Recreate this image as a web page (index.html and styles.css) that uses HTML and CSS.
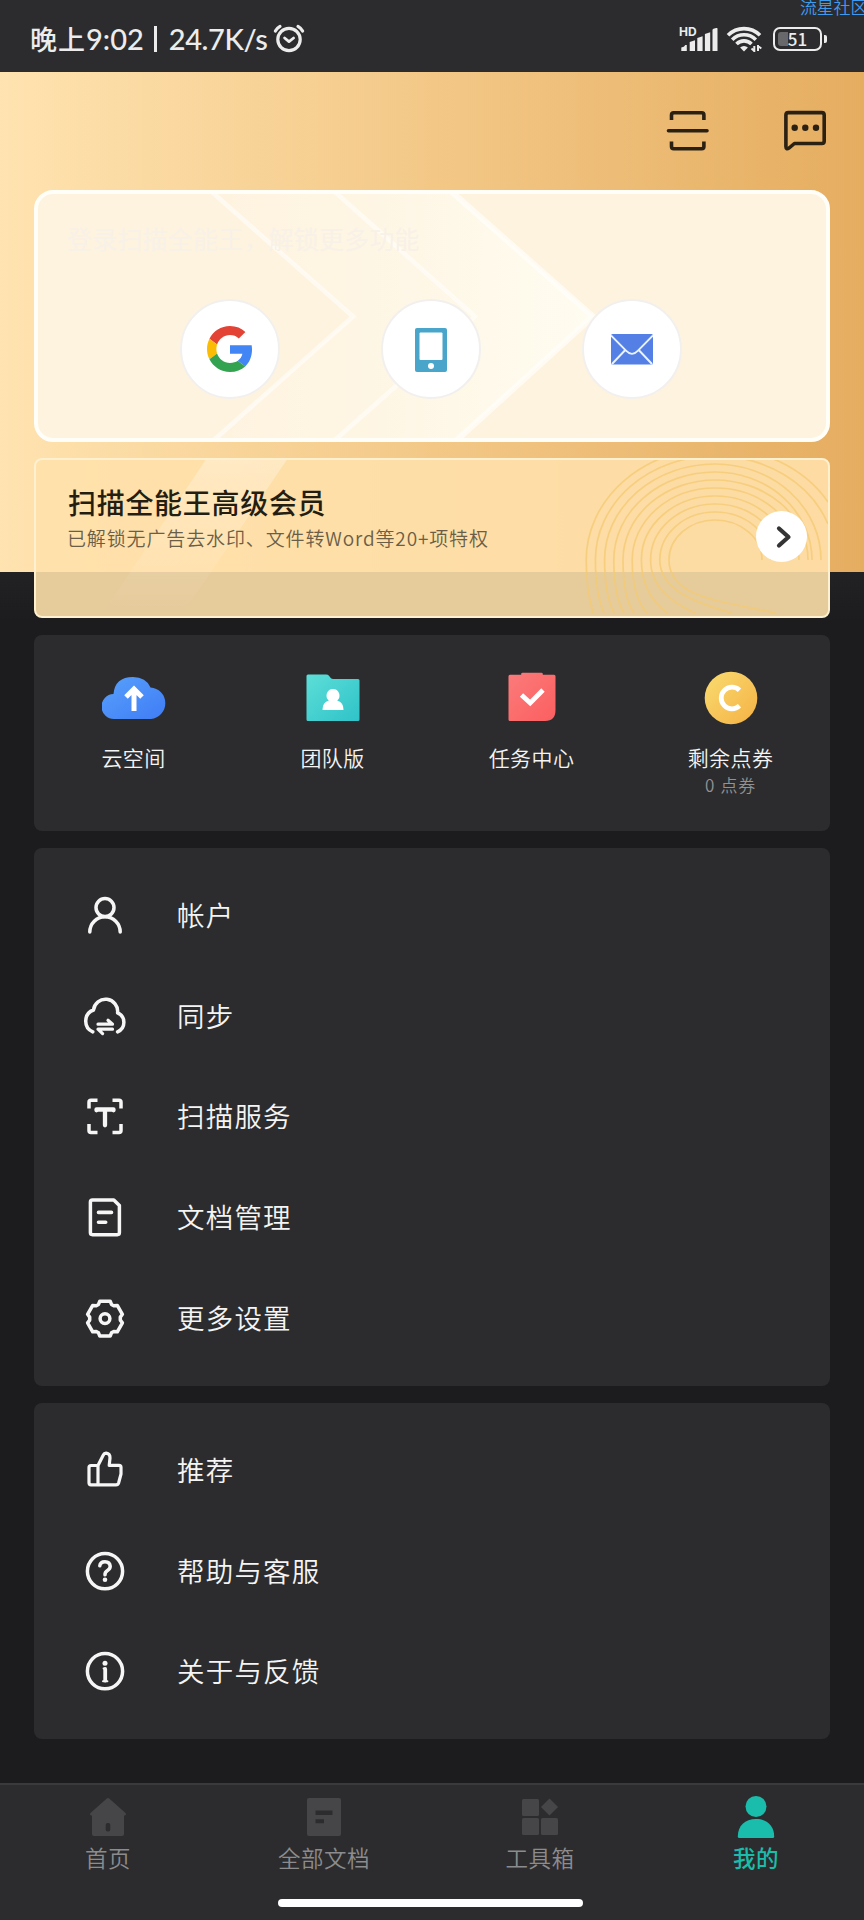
FILE: index.html
```html
<!DOCTYPE html>
<html lang="zh-CN">
<head>
<meta charset="utf-8">
<title>我的</title>
<link rel="stylesheet" href="styles.css">
</head>
<body>
<div class="screen">
  <header class="status">
    <div class="status-left">
      <span class="clock"><span class="clock-cn">晚上</span>9:02<span class="bar"></span><span class="speed">24.7K/s</span></span>
      <svg class="alarm" width="32" height="30" viewBox="273 24 32 30" fill="none" stroke="#ececec" stroke-width="3.200" stroke-linecap="round" stroke-linejoin="round"><circle cx="289" cy="39.500" r="11.200"/><path d="M284.600 38l4.400 3.600 4.600-3.600" stroke-width="2.800"/><path d="M275.400 31q1.600-3 4.600-4.600M302.600 31q-1.600-3-4.600-4.600" stroke-width="3.200"/></svg>
    </div>
    <div class="status-right">
      <div class="signal">
        <span class="hd">HD</span>
        <svg width="38" height="24" viewBox="679 28 38 24" fill="#ececec"><path d="M680.300 51v-3.500q3-.5 4-2.500h1.500v6zM688.700 51v-9l5.300-1.800V51zM696.300 51V38l5.300-1.800V51zM703.900 51V34l5.300-1.800V51zM711.500 51V30q0-1 1-1.300l3-.8q1 0 1 1V51z"/></svg>
      </div>
      <svg class="wifi" width="36" height="27" viewBox="726 25 36 27" fill="none" stroke="#ececec" stroke-width="3.600"><path d="M728 35.300a22.500 22.500 0 0 1 32 0M732.200 39.700a16.600 16.600 0 0 1 23.600 0M736.500 44a10.600 10.600 0 0 1 15 0"/><path d="M744 51.500l-3.900-3.900a5.500 5.500 0 0 1 7.800 0z" fill="#ececec" stroke="none"/><path d="M754.300 46v6M758 45v6M754.300 51l-2.800-2.500M758 46l3.300 2.500" stroke-width="2"/></svg>
      <div class="battery"><span class="charge"></span><span class="percent">51</span></div>
    </div>
    <span class="watermark">流星社区</span>
  </header>

  <main class="content">
    <div class="tools">
      <svg width="44" height="42" viewBox="666 110 44 42" fill="none" stroke="#2b2112" stroke-width="3.600"><path d="M671.500 120v-5q0-2.200 2.200-2.200h28q2.200 0 2.200 2.200v5M671.500 141.500v5q0 2.200 2.200 2.200h28q2.200 0 2.200-2.200v-5"/><path d="M668.500 130.700h38.500" stroke-linecap="round"/></svg>
      <svg width="44" height="42" viewBox="783 112 44 42" fill="none" stroke="#2b2112" stroke-width="3.600" stroke-linejoin="round"><path d="M788.300 114.600h33.400q2.500 0 2.500 2.500v26.200q0 2.200-2.300 2.200h-27.500l-5.300 4.500q-3.200 1.800-3.200-1.500v-31.400q0-2.500 2.400-2.500z"/><g fill="#2b2112" stroke="none"><circle cx="794.700" cy="129.700" r="3.200"/><circle cx="805.300" cy="129.700" r="3.200"/><circle cx="816" cy="129.700" r="3.200"/></g></svg>
    </div>

    <section class="login">
      <svg class="login-art" viewBox="34 190 796 252" fill="none">
        <defs><linearGradient id="fade" gradientUnits="userSpaceOnUse" x1="330" y1="0" x2="594" y2="0"><stop offset="0" stop-color="#fffdf2" stop-opacity=".15"/><stop offset="1" stop-color="#fffdf2" stop-opacity=".9"/></linearGradient>
        <linearGradient id="fade2" gradientUnits="userSpaceOnUse" x1="210" y1="0" x2="475" y2="0"><stop offset="0" stop-color="#fffdf2" stop-opacity="0"/><stop offset="1" stop-color="#fffdf2" stop-opacity=".5"/></linearGradient></defs>
        <path d="M212 192l142 124-142 124h124l140-124-140-124z" fill="url(#fade2)"/>
        <path d="M335 192l141 124-141 124h122l137-124-142-124z" fill="url(#fade)"/>
        <path d="M212 192l141 124.500-139 123.500M335 192l140 124.500-140 123.500" stroke="#fffefa" stroke-opacity=".65" stroke-width="4.600"/>
        <path d="M452 192l141 124.500-136 123.500" stroke="#fffefa" stroke-opacity=".75" stroke-width="6"/>
      </svg>
      <p class="login-title">登录扫描全能王，解锁更多功能</p>
      <div class="login-options">
        <button class="round" aria-label="Google"><svg width="46" height="46" viewBox="0 0 48 48"><path fill="#e24334" d="M24 9.500c3.540 0 6.710 1.220 9.210 3.600l6.850-6.850C35.900 2.380 30.470 0 24 0 14.620 0 6.510 5.380 2.560 13.220l7.980 6.190C12.430 13.720 17.740 9.500 24 9.500z"/><path fill="#4285f4" d="M46.980 24.550c0-1.570-.15-3.090-.38-4.550H24v9.020h12.940c-.58 2.960-2.260 5.480-4.780 7.180l7.730 6c4.510-4.180 7.090-10.360 7.090-17.650z"/><path fill="#fbbc05" d="M10.530 28.590c-.48-1.450-.76-2.990-.76-4.590s.27-3.140.76-4.590l-7.980-6.190C.92 16.460 0 20.120 0 24c0 3.880.92 7.540 2.560 10.780l7.970-6.190z"/><path fill="#34a351" d="M24 48c6.480 0 11.930-2.130 15.890-5.810l-7.730-6c-2.150 1.450-4.920 2.300-8.160 2.300-6.260 0-11.570-4.220-13.470-9.910l-7.980 6.190C6.510 42.620 14.620 48 24 48z"/></svg></button>
        <button class="round" aria-label="手机"><svg width="34" height="46" viewBox="0 0 34 46"><rect x="1" y="2" width="32" height="44" rx="2" fill="#49a5ca"/><rect x="5.500" y="6.500" width="23" height="27.500" rx="1" fill="#fff"/><circle cx="17" cy="40" r="3" fill="#fff"/></svg></button>
        <button class="round" aria-label="邮箱"><svg width="42" height="31" viewBox="0 0 42 31"><rect width="42" height="30.500" rx="1.500" fill="#5480e6"/><path d="M0 1.500l15 15.200q6 6.300 12 0L42 1.500M1 30l12.800-13.500M41 30L28.200 16.500" fill="none" stroke="#eaf3ff" stroke-width="1.900"/></svg></button>
      </div>
    </section>

    <section class="member">
      <svg class="member-art" viewBox="0 0 796 160" fill="none">
        <defs><linearGradient id="band" x1="0" y1="0" x2="0" y2="1"><stop offset="0" stop-color="#fff" stop-opacity=".32"/><stop offset=".6" stop-color="#fff" stop-opacity=".1"/><stop offset="1" stop-color="#fff" stop-opacity="0"/></linearGradient></defs>
        <path d="M173 0h81L146 160H65z" fill="url(#band)"/>
        <g stroke="#f4cb74" stroke-opacity=".8" stroke-width="1.700">
          <path d="M741 155C688 143 635 140 635 102A46 40 0 0 1 681 62A47 40 0 0 1 728 102"/>
          <path d="M698 155C662 145 625.800 132 625.800 102A55.200 48 0 0 1 681 54A56 48 0 0 1 737 102"/>
          <path d="M661 155C639 145 616.600 130 616.600 102A64.400 56 0 0 1 681 46A65 56 0 0 1 746 102"/>
          <path d="M633 155C620 145 607.400 130 607.400 102A73.600 64 0 0 1 681 38A74 64 0 0 1 755 102"/>
          <path d="M613 155C604 145 598.200 130 598.200 102A82.800 72 0 0 1 681 30A84 72 0 0 1 765 102"/>
          <path d="M600 155C593 145 589 130 589 102A92 80 0 0 1 681 22A93 80 0 0 1 774 102"/>
          <path d="M590 155C584 145 579.800 130 579.800 102A101.200 88 0 0 1 681 14A97 88 0 0 1 778 102"/>
          <path d="M580 155C575 145 570.600 130 570.600 102A110.400 96 0 0 1 681 6A106 96 0 0 1 787 102"/>
          <path d="M570 155C565 143 561.400 125 561.400 102A119.600 104 0 0 1 681 -2A120 104 0 0 1 794 66"/>
          <path d="M559 155C555 141 552.200 125 552.200 102A128.800 112 0 0 1 681 -10A129 112 0 0 1 794 44"/>
        </g>
      </svg>
      <div class="member-text">
        <h1>扫描全能王高级会员</h1>
        <p>已解锁无广告去水印、文件转Word等20+项特权</p>
      </div>
      <button class="go" aria-label="查看"><svg width="16" height="24" viewBox="0 0 16 24"><path d="M3 3.500l9.500 8.500L3 20.500" fill="none" stroke="#343434" stroke-width="4.200" stroke-linecap="round" stroke-linejoin="round"/></svg></button>
    </section>

    <section class="card shortcuts">
      <div class="shortcut">
        <svg width="64" height="56" viewBox="0 0 64 56"><defs><linearGradient id="gb" x1="0" y1="0" x2="1" y2="1"><stop offset="0" stop-color="#58a1fb"/><stop offset="1" stop-color="#3f7cf6"/></linearGradient></defs><path d="M12.500 49A12.500 12.500 0 0 1 11.500 24Q13 7 31 7Q44 7 48.500 17.500A15.800 15.800 0 0 1 49 49z" fill="url(#gb)"/><path d="M32 41V21M24 27l8-8 8 8" fill="none" stroke="#fff" stroke-width="5"/></svg>
        <span>云空间</span>
      </div>
      <div class="shortcut">
        <svg width="64" height="56" viewBox="0 0 64 56"><defs><linearGradient id="gt" x1="0" y1="0" x2="1" y2="1"><stop offset="0" stop-color="#5dded8"/><stop offset="1" stop-color="#2fc3c8"/></linearGradient></defs><path d="M7 4.500h18q2 0 3 1.200l1.500 2q1 1.300 3 1.300H57q1.500 0 1.500 1.500v39q0 1.500-1.500 1.500H7q-1.500 0-1.500-1.500V6q0-1.500 1.500-1.500z" fill="url(#gt)"/><path d="M32 19a6.600 6.600 0 0 1 4.200 11.600q6.300 2 6.300 8.900 0 .5-.5.500H22q-.5 0-.5-.5 0-6.900 6.300-8.900A6.600 6.600 0 0 1 32 19z" fill="#fff"/></svg>
        <span>团队版</span>
      </div>
      <div class="shortcut">
        <svg width="64" height="56" viewBox="0 0 64 56"><defs><linearGradient id="gr" x1="0" y1="0" x2="1" y2="1"><stop offset="0" stop-color="#fb7b7b"/><stop offset="1" stop-color="#fb5f60"/></linearGradient></defs><path d="M10 4.700h11.200V4q0-1.300 1.300-1.300H41.500q1.300 0 1.300 1.300v.7H54q1.500 0 1.500 1.500V40Q55.500 51 45 51H10q-1.500 0-1.500-1.500V6.200q0-1.500 1.500-1.500z" fill="url(#gr)"/><path d="M21.500 25l8.700 8 12.800-13" fill="none" stroke="#fff" stroke-width="4.800"/></svg>
        <span>任务中心</span>
      </div>
      <div class="shortcut">
        <svg width="64" height="56" viewBox="0 0 64 56"><defs><linearGradient id="gy" x1="0" y1="0" x2="1" y2="1"><stop offset="0" stop-color="#f9dc70"/><stop offset="1" stop-color="#f5b144"/></linearGradient></defs><circle cx="32" cy="28" r="26.300" fill="url(#gy)"/><path d="M40.500 20.200A10.800 10.800 0 1 0 40.500 35.800" fill="none" stroke="#fff" stroke-width="4.800"/></svg>
        <span>剩余点券</span>
        <small>0 点券</small>
      </div>
    </section>

    <section class="card menu">
      <div class="row"><svg class="icon" viewBox="0 0 48 48"><circle cx="24" cy="16.600" r="9"/><path d="M8.800 41a15.200 15.200 0 0 1 30.400 0"/></svg><span>帐户</span></div>
      <div class="row"><svg class="icon" viewBox="0 0 48 48"><path d="M11.800 39.900A11.800 11.800 0 0 1 12.500 18A12 12 0 0 1 36.600 20.800A10.400 10.400 0 0 1 36.600 39.900"/><path d="M17 32.200h14.500L27 28.200M31.500 37.200H17l4.600 4.400" stroke-width="3.200"/></svg><span>同步</span></div>
      <div class="row"><svg class="icon" viewBox="0 0 48 48"><path d="M8 16.500v-6.300q0-2 2-2h6.500M31.500 8.200H38q2 0 2 2v6.300M40 32v6.400q0 2-2 2h-6.500M16.500 40.400H10q-2 0-2-2V32" stroke-linecap="butt"/><path d="M15.500 18.300v-.8h17v.8M24 17.500v15.800" stroke-width="4.300"/></svg><span>扫描服务</span></div>
      <div class="row"><svg class="icon" viewBox="0 0 48 48"><path d="M11.500 7h21.300l5.600 5.600V39.600q0 2.100-2.100 2.100H11.500q-2.100 0-2.100-2.100V9.100Q9.400 7 11.500 7z"/><path d="M17.500 19.400h13M17.500 29.200h7.200" stroke-width="3.600"/></svg><span>文档管理</span></div>
      <div class="row"><svg class="icon" viewBox="0 0 48 48"><path transform="translate(24 24.600)" d="M5.200-17.400L6.500-14.200 8.800-12.900 12.300-13.200 17.400-4.300 15.300-1.500V1.500L17.400 4.300 12.300 13.200 8.800 12.900 6.500 14.200 5.200 17.400H-5.200L-6.500 14.200-8.800 12.900-12.300 13.200-17.400 4.300-15.300 1.500V-1.500L-17.400-4.300-12.300-13.200-8.800-12.900-6.500-14.200-5.200-17.400z"/><circle cx="24" cy="24.600" r="4.900"/></svg><span>更多设置</span></div>
    </section>

    <section class="card menu">
      <div class="row"><svg class="icon thin" viewBox="0 0 48 48"><path d="M17 19.500L22.300 9Q23.200 7 25.200 7.100Q29.200 7.600 29 12L28.200 19.300H38Q40 19.300 40 21.300V28L37.600 37Q37 38.800 35 38.800H10Q8 38.800 8 36.800V21.500Q8 19.500 10 19.500H17V38.800"/></svg><span>推荐</span></div>
      <div class="row"><svg class="icon" viewBox="0 0 48 48"><circle cx="24" cy="24.200" r="17.600"/><path d="M18.800 18.800Q19.200 14.700 24 14.700T29.200 19.200Q29.200 21.800 26.500 23.400T24 27.800"/><circle class="solid" cx="24" cy="32.700" r="2.300"/></svg><span>帮助与客服</span></div>
      <div class="row"><svg class="icon" viewBox="0 0 48 48"><circle cx="24" cy="24.200" r="17.600"/><path d="M24.200 22v11.500" stroke-width="3.800"/><path d="M22.600 21.600h1.400M22 34.200h4.400" stroke-width="2"/><circle class="solid" cx="24" cy="16.300" r="2.500"/></svg><span>关于与反馈</span></div>
    </section>
  </main>

  <nav class="tabbar">
    <div class="tabs">
      <div class="tab"><svg width="44" height="44" viewBox="0 0 44 44"><path d="M20.800 3.600q1.200-1 2.400 0L39.500 18q1.300 1.700-.5 2.400h-1V39q0 2-2 2H8q-2 0-2-2V20.400H5q-1.800-.7-.5-2.400z"/><rect x="19.700" y="28" width="4.600" height="8.500" rx="2" fill="#2c2c2e"/></svg><span>首页</span></div>
      <div class="tab"><svg width="44" height="44" viewBox="0 0 44 44"><rect x="5" y="3" width="34" height="38" rx="2"/><path d="M13.500 15.500h17v4.500h-17zM13.500 24.300H22v4h-8.500z" fill="#2c2c2e"/></svg><span>全部文档</span></div>
      <div class="tab"><svg width="44" height="44" viewBox="0 0 44 44"><rect x="4" y="4" width="17" height="17" rx="1.500"/><rect x="4" y="23" width="17" height="17" rx="1.500"/><rect x="23" y="23" width="17" height="17" rx="1.500"/><path d="M31.500 3.500L40 12l-8.500 8.500L23 12z"/></svg><span>工具箱</span></div>
      <div class="tab active"><svg width="44" height="44" viewBox="0 0 44 44"><circle cx="22" cy="11.500" r="10.500"/><path d="M3.800 41.500C3.800 31 11 24 22 24S40.200 31 40.200 41.500Q40.200 43 38.700 43H5.300Q3.800 43 3.800 41.500z"/></svg><span>我的</span></div>
    </div>
    <div class="home-bar"></div>
  </nav>
</div>
</body>
</html>
```
FILE: styles.css
```css
* { box-sizing: border-box; margin: 0; padding: 0; }
body {
  width: 864px;
  background: #1c1c1e;
  font-family: "Noto Sans CJK SC", sans-serif;
  color: #f4f4f4;
}
.screen {
  display: flex;
  flex-direction: column;
  width: 864px;
  height: 1920px;
  overflow: hidden;
  position: relative;
}
button { border: 0; background: none; }
svg { display: block; flex: none; }

/* status bar */
.status {
  flex: none;
  height: 72px;
  display: flex;
  justify-content: space-between;
  padding: 24px 38px 0 30px;
  background: #2c2c2e;
  color: #ececec;
  position: relative;
}
.status-left { display: flex; }
.clock {
  display: flex;
  align-items: center;
  width: 243px;
  height: 30px;
  font: 500 29px/30px Lato, "Noto Sans CJK SC", sans-serif;
  white-space: nowrap;
}
.clock-cn { font-size: 27px; letter-spacing: 1px; font-family: "Noto Sans CJK SC", sans-serif; }
.bar { width: 3px; height: 26px; margin: 0 12px 0 10px; background: #ececec; }
.speed { letter-spacing: -.4px; }
.status-right { display: flex; }
.signal { position: relative; width: 38px; padding-top: 4px; margin-right: -1px; }
.hd {
  position: absolute;
  left: -1px;
  top: 2px;
  font: 700 12px/11px Inter, sans-serif;
}
.wifi { margin: 1px 0 0 9px; }
.battery {
  position: relative;
  width: 49px;
  height: 24px;
  margin: 3px 4px 0 11px;
  border: 2px solid #ececec;
  border-radius: 7px;
}
.battery::after {
  content: "";
  position: absolute;
  right: -7px;
  top: 6px;
  width: 3px;
  height: 8px;
  border-radius: 0 2px 2px 0;
  background: #ececec;
}
.charge {
  position: absolute;
  left: 3px;
  top: 3px;
  width: 10px;
  height: 14px;
  border-radius: 3px 0 0 3px;
  background: #68686a;
}
.percent {
  position: relative;
  display: block;
  text-align: center;
  font: 500 17px/19px "Noto Sans CJK SC", sans-serif;
}
.watermark {
  position: absolute;
  left: 800px;
  top: -2px;
  font-size: 17px;
  line-height: 18px;
  font-weight: 350;
  letter-spacing: -.2px;
  color: #3f9bee;
  white-space: nowrap;
}

/* scrolling content over the gold hero */
.content {
  flex: 1;
  display: flex;
  flex-direction: column;
  gap: 17px;
  padding: 0 34px;
  background:
    linear-gradient(90deg, #ffe3b0, #f3c887 50%, #e5ad60) 0 0 / 100% 500px no-repeat,
    linear-gradient(#222224, #1c1c1e) 0 500px / 100% 50px no-repeat,
    #1c1c1e;
}
.tools {
  height: 101px;
  display: flex;
  justify-content: flex-end;
  gap: 73px;
  padding: 38px 3px 0 0;
}
.login {
  position: relative;
  height: 252px;
  border: 4px solid #fffef8;
  border-radius: 19px;
  background: #fef3df;
  overflow: hidden;
}
.login-art { position: absolute; left: -4px; top: -4px; width: 796px; height: 252px; }
.login-title {
  position: relative;
  padding: 29px 0 0 29px;
  font-size: 25px;
  line-height: 30px;
  letter-spacing: .2px;
  color: #f8f1e8;
}
.login-options {
  position: relative;
  left: -1px;
  display: flex;
  justify-content: center;
  gap: 101px;
  margin-top: 46px;
}
.round {
  display: flex;
  align-items: center;
  justify-content: center;
  width: 100px;
  height: 100px;
  border: 2px solid #f2f0ee;
  border-radius: 50%;
  background: #fff;
}
.member {
  position: relative;
  flex: none;
  height: 160px;
  margin-top: -1px;
  display: flex;
  justify-content: space-between;
  border: 2px solid #fff0cf;
  border-radius: 8px;
  background: rgba(255, 225, 171, .89);
  overflow: hidden;
}
.member-art { position: absolute; left: -2px; top: -2px; width: 796px; height: 160px; }
.member-text { position: relative; padding: 23px 0 0 32px; }
.member h1 {
  font-size: 28px;
  line-height: 38px;
  font-weight: 500;
  letter-spacing: .7px;
  color: #241d12;
}
.member p {
  font-size: 19px;
  line-height: 28px;
  letter-spacing: .87px;
  font-weight: 350;
  color: #6b5e48;
  margin-top: 3px;
  margin-left: -1px;
}
.go {
  position: relative;
  display: flex;
  align-items: center;
  justify-content: center;
  width: 51px;
  height: 51px;
  margin: 51px 21px 0 0;
  padding-left: 5px;
  border-radius: 50%;
  background: #fff;
}
.card { background: #2c2c2e; border-radius: 8px; flex: none; }
.shortcuts {
  display: grid;
  grid-template-columns: repeat(4, 1fr);
  height: 196px;
  padding-top: 35px;
}
.shortcut { display: flex; flex-direction: column; align-items: center; }
.shortcut span {
  margin-top: 16px;
  font-size: 21px;
  line-height: 30px;
  letter-spacing: .4px;
  font-weight: 350;
}
.shortcut small {
  margin-top: 2px;
  font-size: 17px;
  line-height: 22px;
  letter-spacing: .7px;
  word-spacing: 1px;
  font-weight: 350;
  color: #929294;
}
.menu { padding: 17px 0 17px 47px; }
.row {
  display: flex;
  align-items: center;
  gap: 48px;
  height: 100.8px;
}
.row span {
  padding-bottom: 3px;
  font-size: 27.5px;
  line-height: 40px;
  letter-spacing: 1.2px;
  font-weight: 350;
}
.icon {
  width: 48px;
  height: 48px;
  margin-bottom: 1px;
  fill: none;
  stroke: #f6f6f6;
  stroke-width: 3.500;
  stroke-linecap: round;
  stroke-linejoin: round;
}
.icon.thin { stroke-width: 3.200; }
.icon .solid { fill: #f6f6f6; stroke: none; }

/* bottom navigation */
.tabbar {
  flex: none;
  height: 137px;
  border-top: 2px solid #3a3a3c;
  background: #2c2c2e;
}
.tabs { display: grid; grid-template-columns: repeat(4, 1fr); padding-top: 10px; }
.tab {
  display: flex;
  flex-direction: column;
  align-items: center;
  color: #8c8c8e;
  font-size: 22.5px;
  line-height: 30px;
  letter-spacing: .5px;
  font-weight: 350;
}
.tab svg { fill: #464648; margin-bottom: 3px; }
.tab.active { color: #1abdab; font-weight: 500; }
.tab.active svg { fill: #1abdab; }
.home-bar {
  width: 305px;
  height: 8px;
  margin: 27px auto 0 278px;
  border-radius: 4px;
  background: #fff;
}
```
